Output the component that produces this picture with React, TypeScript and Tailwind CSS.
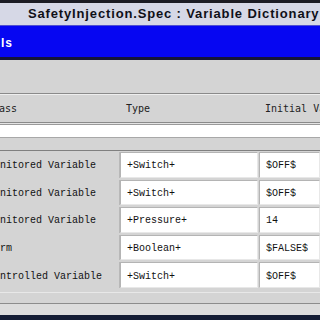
import React from 'react';

const rows = [
  { cls: 'Monitored Variable', type: '+Switch+', init: '$OFF$' },
  { cls: 'Monitored Variable', type: '+Switch+', init: '$OFF$' },
  { cls: 'Monitored Variable', type: '+Pressure+', init: '14' },
  { cls: 'Term', type: '+Boolean+', init: '$FALSE$' },
  { cls: 'Controlled Variable', type: '+Switch+', init: '$OFF$' },
];

const mono = { fontFamily: '"Liberation Mono", "DejaVu Sans Mono", monospace' };

function Cell({ text }: { text: string }) {
  return (
    <div className="h-full bg-white border border-[#b4b4b4] border-r-[#e8e8e8] border-b-[#e8e8e8] flex items-center pl-[6px] pt-[2px] text-[10px] text-[#111] overflow-hidden whitespace-nowrap">
      {text}
    </div>
  );
}

export default function App() {
  return (
    <div className="w-[320px] h-[320px] overflow-hidden bg-[#d4d4d4] flex flex-col">
      {/* window top */}
      <div className="h-[3px] bg-[#1c1c24]" />
      <div className="h-[22px] bg-[#d6d8e6] flex items-center pl-[28px] whitespace-nowrap overflow-hidden">
        <span
          className="text-[13px] font-bold tracking-[0.85px] text-[#101018] shrink-0"
          style={{ fontFamily: '"Liberation Sans", Arial, sans-serif' }}
        >
          SafetyInjection.Spec : Variable Dictionary
        </span>
      </div>
      <div className="h-[1px] bg-[#5050d0]" />
      {/* blue tab bar */}
      <div className="h-[31px] bg-[#0606f2] flex items-center pl-[1px] pt-[3px] overflow-hidden">
        <span
          className="text-[12px] font-bold text-white tracking-[1px]"
          style={{ fontFamily: '"Liberation Sans", Arial, sans-serif' }}
        >
          ls
        </span>
      </div>
      <div className="h-[3px] bg-[#141438]" />

      <div className="h-[33px]" />
      <div className="h-[1px] bg-[#8a8a8a]" />
      <div className="h-[1px] bg-[#eeeeee]" />
      {/* header */}
      <div className="h-[27px] flex items-center text-[10px] text-[#222] overflow-hidden" style={{ fontFamily: '"DejaVu Sans Mono", monospace' }}>
        <div className="w-[120px] shrink-0 overflow-hidden whitespace-nowrap">
          <span className="-ml-[13px] inline-block">Class</span>
        </div>
        <div className="w-[139px] shrink-0 pl-[6px]">Type</div>
        <div className="shrink-0 pl-[6px] whitespace-nowrap">Initial Value</div>
      </div>
      <div className="h-[1px] bg-[#8a8a8a]" />
      <div className="h-[1px] bg-[#e4e4e4]" />
      <div className="h-[1px] bg-[#9a9a9a]" />
      {/* blank edit line */}
      <div className="h-[12px] bg-white" />
      <div className="h-[1px] bg-[#a8a8a8]" />
      <div className="h-[12px]" />
      <div className="h-[1px] bg-[#808080]" />

      {/* rows */}
      <div className="flex flex-col gap-[2px] pt-[1px]" style={mono}>
        {rows.map((r, i) => (
          <div key={i} className="h-[25.6px] flex">
            <div className="w-[120px] shrink-0 flex items-center pt-[2px] overflow-hidden whitespace-nowrap text-[10px] text-[#111] border-r border-[#b8b8b8]">
              <span className="-ml-[12px] inline-block">{r.cls}</span>
            </div>
            <div className="w-[138px] shrink-0">
              <Cell text={r.type} />
            </div>
            <div className="w-[1px] shrink-0" />
            <div className="flex-1">
              <Cell text={r.init} />
            </div>
          </div>
        ))}
      </div>

      <div className="h-[4px]" />
      <div className="h-[1px] bg-[#e8e8e8]" />
      <div className="h-[10px]" />
      <div className="h-[1px] bg-[#8c8c8c]" />
      <div className="flex-1 bg-[#dcdcdc]" />
      <div className="h-[5px] bg-[#141c34]" />
    </div>
  );
}
